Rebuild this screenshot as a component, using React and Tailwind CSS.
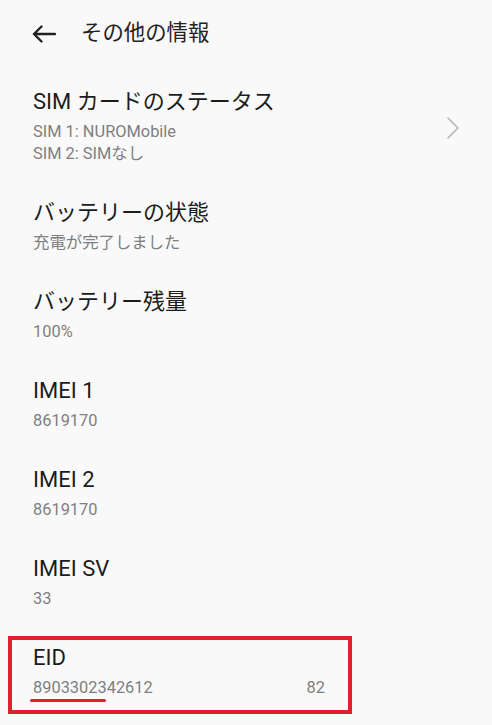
import React from 'react';

const rows = [
  { title: 'SIM カードのステータス', lines: ['SIM 1: NUROMobile', 'SIM 2: SIMなし'], chevron: true },
  { title: 'バッテリーの状態', lines: ['充電が完了しました'] },
  { title: 'バッテリー残量', lines: ['100%'] },
  { title: 'IMEI 1', lines: ['8619170'] },
  { title: 'IMEI 2', lines: ['8619170'] },
  { title: 'IMEI SV', lines: ['33'] },
];

const Row = ({ title, lines, chevron }) => (
  <div className="relative flex items-center pl-[33px] pr-[32px] py-[17px]">
    <div className="flex-1">
      <p className="text-[22px] leading-[28px] text-[#1c1c1c]">{title}</p>
      <div className="mt-[5px]">
        {lines.map((l) => (
          <p key={l} className="text-[16.4px] leading-[22px] text-[#7f7f7f]">{l}</p>
        ))}
      </div>
    </div>
    {chevron && (
      <svg width="14" height="24" viewBox="0 0 14 24" fill="none" className="mt-[2px]">
        <path d="M2 2 L12 12 L2 22" stroke="#b5b5b5" strokeWidth="1.6" strokeLinecap="round" strokeLinejoin="round" />
      </svg>
    )}
  </div>
);

export default function App() {
  return (
    <div
      className="w-[492px] h-[725px] overflow-hidden bg-[#f9f9f9]"
      style={{ fontFamily: 'Roboto, "Noto Sans CJK JP", sans-serif' }}
    >
      <header className="flex h-[67px] items-center pl-[32px]">
        <svg width="24" height="18" viewBox="0 0 24 18" fill="none">
          <path d="M23 9 H2 M9.5 1.5 L2 9 L9.5 16.5" stroke="#222" strokeWidth="2.4" strokeLinecap="round" strokeLinejoin="round" />
        </svg>
        <h1 className="ml-[25px] text-[21.4px] text-[#222]">その他の情報</h1>
      </header>

      <div className="mt-[4px]">
        {rows.map((r) => (
          <Row key={r.title} {...r} />
        ))}

        <div className="relative pl-[33px] py-[17px]">
          <p className="text-[22px] leading-[28px] text-[#1c1c1c]">EID</p>
          <div className="mt-[5px] flex w-[292px] justify-between text-[16.4px] leading-[22px] text-[#7f7f7f]">
            <span>8903302342612</span>
            <span>82</span>
          </div>
          <div className="absolute left-[8px] top-[9px] h-[78px] w-[344px] border-[4px] border-[#e21f2d]" />
          <div className="absolute left-[30px] top-[72px] h-[3px] w-[76px] rounded-full bg-[#e21f2d]" />
        </div>
      </div>
    </div>
  );
}
